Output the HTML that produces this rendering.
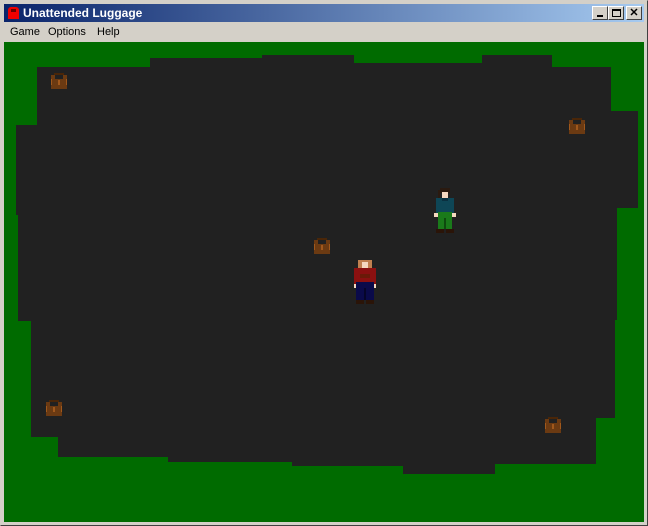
<!DOCTYPE html>
<html><head><style>
*{margin:0;padding:0;box-sizing:border-box}
body{width:648px;height:526px;background:#d4d0c8;position:relative;overflow:hidden;font-family:"Liberation Sans",sans-serif}
.a{position:absolute}
#tb{left:4px;top:4px;width:640px;height:18px;background:linear-gradient(90deg,#0a246a,#a6caf0)}
#tt{left:23px;top:5px;color:#fff;font-weight:bold;font-size:12px;line-height:16px}
.btn{top:6px;width:16px;height:14px;background:#d4d0c8;border:1px solid;border-color:#fff #404040 #404040 #fff;font-size:11px;text-align:center;line-height:12px;color:#000}
#menu{top:26px;font-size:11px;color:#000}
</style></head><body>
<div class="a" style="left:0;top:0;width:648px;height:526px;border:1px solid;border-color:#d4d0c8 #404040 #404040 #d4d0c8"></div>
<div class="a" id="tb"></div>
<div class="a" style="left:8px;top:7px;width:11px;height:12px;background:#e00;border-radius:3px 3px 0 0"></div>
<div class="a" style="left:11px;top:9px;width:5px;height:3px;background:#600"></div>
<div class="a" id="tt">Unattended Luggage</div>
<div class="a btn" style="left:592px"><div style="position:absolute;left:4px;top:8px;width:6px;height:2px;background:#000"></div></div>
<div class="a btn" style="left:608px"><div style="position:absolute;left:3px;top:2px;width:9px;height:8px;border:1px solid #000;border-top-width:2px"></div></div>
<div class="a btn" style="left:626px;font-weight:bold">✕</div>
<div class="a" id="menu" style="left:10px">Game</div>
<div class="a" id="menu" style="left:48px">Options</div>
<div class="a" id="menu" style="left:97px">Help</div>
<svg class="a" style="left:0;top:0" width="648" height="526" shape-rendering="crispEdges">
<defs>
<g id="s">
<rect x="4" y="0" width="10" height="2" fill="#4a2608"/>
<rect x="1" y="2" width="16" height="14" fill="#6b3a12"/>
<rect x="5" y="2" width="8" height="4" fill="#212121"/>
<rect x="1" y="6" width="1" height="6" fill="#a0581c"/>
<rect x="8" y="7" width="2" height="5" fill="#a0581c"/>
<rect x="16" y="6" width="1" height="6" fill="#a0581c"/>
</g>
</defs>
<rect x="4" y="42" width="640" height="480" fill="#006b00"/>
<path fill="#212121" d="M37 67H150V58H262V55H354V63H482V55H552V67H611V111H638V208H617V320H615V418H596V464H495V474H403V466H292V462H168V457H58V437H31V321H18V215H16V125H37Z"/>
<use href="#s" x="50" y="73"/>
<use href="#s" x="568" y="118"/>
<use href="#s" x="313" y="238"/>
<use href="#s" x="45" y="400"/>
<use href="#s" x="544" y="417"/>
<rect x="440" y="188" width="10" height="5" fill="#2a1a10"/>
<rect x="438" y="190" width="2" height="8" fill="#2a1a10"/>
<rect x="442" y="192" width="6" height="6" fill="#f5d8c0"/>
<rect x="436" y="198" width="18" height="15" fill="#0e4656"/>
<rect x="442" y="198" width="6" height="3" fill="#0a3040"/>
<rect x="434" y="213" width="4" height="4" fill="#f5d8c0"/>
<rect x="452" y="213" width="4" height="4" fill="#f5d8c0"/>
<rect x="438" y="212" width="14" height="17" fill="#1a7a1a"/>
<rect x="444" y="218" width="2" height="11" fill="#0e4a0e"/>
<rect x="436" y="229" width="8" height="4" fill="#2a1408"/>
<rect x="446" y="229" width="8" height="4" fill="#2a1408"/>
<rect x="358" y="260" width="14" height="10" fill="#c08050"/>
<rect x="362" y="262" width="6" height="6" fill="#f5d8c0"/>
<rect x="354" y="268" width="22" height="16" fill="#8a1010"/>
<rect x="360" y="274" width="10" height="4" fill="#6a1a08"/>
<rect x="354" y="284" width="4" height="4" fill="#f5d8c0"/>
<rect x="372" y="284" width="4" height="4" fill="#f5d8c0"/>
<rect x="356" y="282" width="18" height="18" fill="#0a0a4a"/>
<rect x="364" y="288" width="2" height="12" fill="#05052a"/>
<rect x="356" y="300" width="8" height="4" fill="#2a1408"/>
<rect x="366" y="300" width="8" height="4" fill="#2a1408"/>
</svg>
</body></html>
